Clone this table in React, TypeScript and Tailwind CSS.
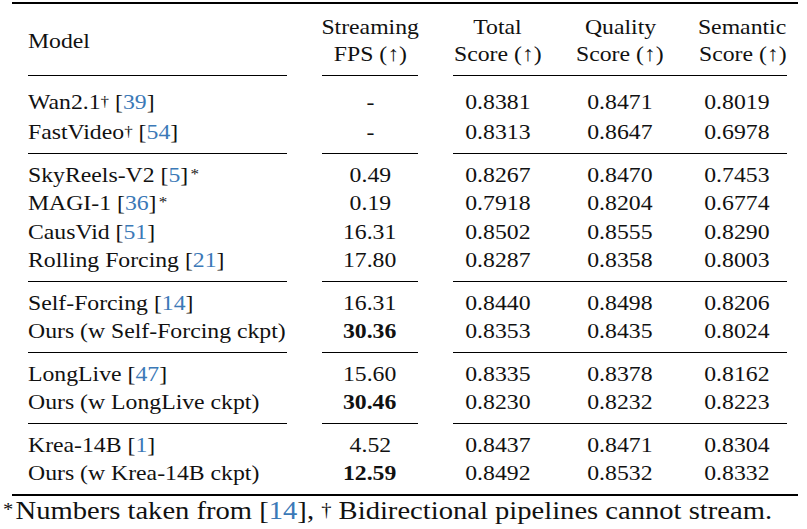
const Cite = ({ n }: { n: string }) => <span className="text-[#3b79b7]">{n}</span>;

const Sup = ({ c, cls = "" }: { c: string; cls?: string }) => (
  <sup className={`text-[0.72em] relative -top-[3px] ${cls}`}>{c}</sup>
);

// the source picture is a little wider than Times, so stretch glyphs sideways
const W = ({ children, left }: { children: React.ReactNode; left?: boolean }) => (
  <span className={`inline-block whitespace-nowrap scale-x-[1.13] ${left ? "origin-left" : "origin-center"}`}>
    {children}
  </span>
);

type Row = {
  model: React.ReactNode;
  fps: React.ReactNode;
  total: string;
  quality: string;
  semantic: string;
};

const groups: { rows: Row[]; first?: boolean }[] = [
  {
    first: true,
    rows: [
      {
        model: (
          <>
            Wan2.1<Sup c="†" /> [<Cite n="39" />]
          </>
        ),
        fps: "-",
        total: "0.8381",
        quality: "0.8471",
        semantic: "0.8019",
      },
      {
        model: (
          <>
            FastVideo<Sup c="†" /> [<Cite n="54" />]
          </>
        ),
        fps: "-",
        total: "0.8313",
        quality: "0.8647",
        semantic: "0.6978",
      },
    ],
  },
  {
    rows: [
      {
        model: (
          <>
            SkyReels-V2 [<Cite n="5" />]<Sup c="*" cls="ml-[2px]" />
          </>
        ),
        fps: "0.49",
        total: "0.8267",
        quality: "0.8470",
        semantic: "0.7453",
      },
      {
        model: (
          <>
            MAGI-1 [<Cite n="36" />]<Sup c="*" cls="ml-[2px]" />
          </>
        ),
        fps: "0.19",
        total: "0.7918",
        quality: "0.8204",
        semantic: "0.6774",
      },
      {
        model: (
          <>
            CausVid [<Cite n="51" />]
          </>
        ),
        fps: "16.31",
        total: "0.8502",
        quality: "0.8555",
        semantic: "0.8290",
      },
      {
        model: (
          <>
            Rolling Forcing [<Cite n="21" />]
          </>
        ),
        fps: "17.80",
        total: "0.8287",
        quality: "0.8358",
        semantic: "0.8003",
      },
    ],
  },
  {
    rows: [
      {
        model: (
          <>
            Self-Forcing [<Cite n="14" />]
          </>
        ),
        fps: "16.31",
        total: "0.8440",
        quality: "0.8498",
        semantic: "0.8206",
      },
      {
        model: "Ours (w Self-Forcing ckpt)",
        fps: <b>30.36</b>,
        total: "0.8353",
        quality: "0.8435",
        semantic: "0.8024",
      },
    ],
  },
  {
    rows: [
      {
        model: (
          <>
            LongLive [<Cite n="47" />]
          </>
        ),
        fps: "15.60",
        total: "0.8335",
        quality: "0.8378",
        semantic: "0.8162",
      },
      {
        model: "Ours (w LongLive ckpt)",
        fps: <b>30.46</b>,
        total: "0.8230",
        quality: "0.8232",
        semantic: "0.8223",
      },
    ],
  },
  {
    rows: [
      {
        model: (
          <>
            Krea-14B [<Cite n="1" />]
          </>
        ),
        fps: "4.52",
        total: "0.8437",
        quality: "0.8471",
        semantic: "0.8304",
      },
      {
        model: "Ours (w Krea-14B ckpt)",
        fps: <b>12.59</b>,
        total: "0.8492",
        quality: "0.8532",
        semantic: "0.8332",
      },
    ],
  },
];

const RuleSegments = () => (
  <div className="flex">
    <div className="ml-[16px] w-[259px] h-px bg-black" />
    <div className="ml-[35px] w-[96px] h-px bg-black" />
    <div className="ml-[35px] w-[334px] h-px bg-black" />
  </div>
);

const DataRow = ({ row, tall }: { row: Row; tall?: boolean }) => (
  <div className={`flex items-center ${tall ? "h-[30px]" : "h-[28.5px]"}`}>
    <div className="ml-[16px] w-[259px]">
      <W left>{row.model}</W>
    </div>
    <div className="ml-[35px] w-[96px] text-center">
      <W>{row.fps}</W>
    </div>
    <div className="ml-[35px] w-[89px] text-center">
      <W>{row.total}</W>
    </div>
    <div className="ml-[33px] w-[90px] text-center">
      <W>{row.quality}</W>
    </div>
    <div className="ml-[33px] w-[89px] pr-[11px] text-center">
      <W>{row.semantic}</W>
    </div>
  </div>
);

const Head = ({ a, b }: { a: string; b: string }) => (
  <>
    <W>{a}</W>
    <br />
    <W>{b}</W>
  </>
);

export default function App() {
  return (
    <div className="w-[807px] h-[529px] bg-white text-[#111] [font-family:'Liberation_Serif',serif] text-[21px] leading-none overflow-hidden">
      <div className="pt-[2px]">
        <div className="ml-[12px] w-[786px]">
          {/* top rule */}
          <div className="h-[2px] bg-black" />

          {/* header */}
          <div className="flex items-center pt-[10px] pb-[7px] leading-[27px]">
            <div className="ml-[16px] w-[259px]">
              <W left>Model</W>
            </div>
            <div className="ml-[35px] w-[96px] text-center">
              <Head a="Streaming" b="FPS (↑)" />
            </div>
            <div className="ml-[35px] w-[89px] text-center">
              <Head a="Total" b="Score (↑)" />
            </div>
            <div className="ml-[33px] w-[90px] text-center">
              <Head a="Quality" b="Score (↑)" />
            </div>
            <div className="ml-[33px] w-[89px] text-center">
              <Head a="Semantic" b="Score (↑)" />
            </div>
          </div>

          {groups.map((g, i) => (
            <div key={i}>
              <RuleSegments />
              <div className={g.first ? "pt-[11px] pb-[6px]" : "pt-[7px] pb-[6px]"}>
                {g.rows.map((r, j) => (
                  <DataRow key={j} row={r} tall={g.first} />
                ))}
              </div>
            </div>
          ))}

          {/* bottom rule */}
          <div className="h-[2px] bg-black" />
        </div>

        {/* footnote */}
        <div className="ml-[3px] h-[30px] flex items-center text-[25.3px]">
          <W left>
            <Sup c="*" cls="mr-[2px]" />
            Numbers taken from [<Cite n="14" />], <Sup c="†" /> Bidirectional pipelines cannot stream.
          </W>
        </div>
      </div>
    </div>
  );
}
